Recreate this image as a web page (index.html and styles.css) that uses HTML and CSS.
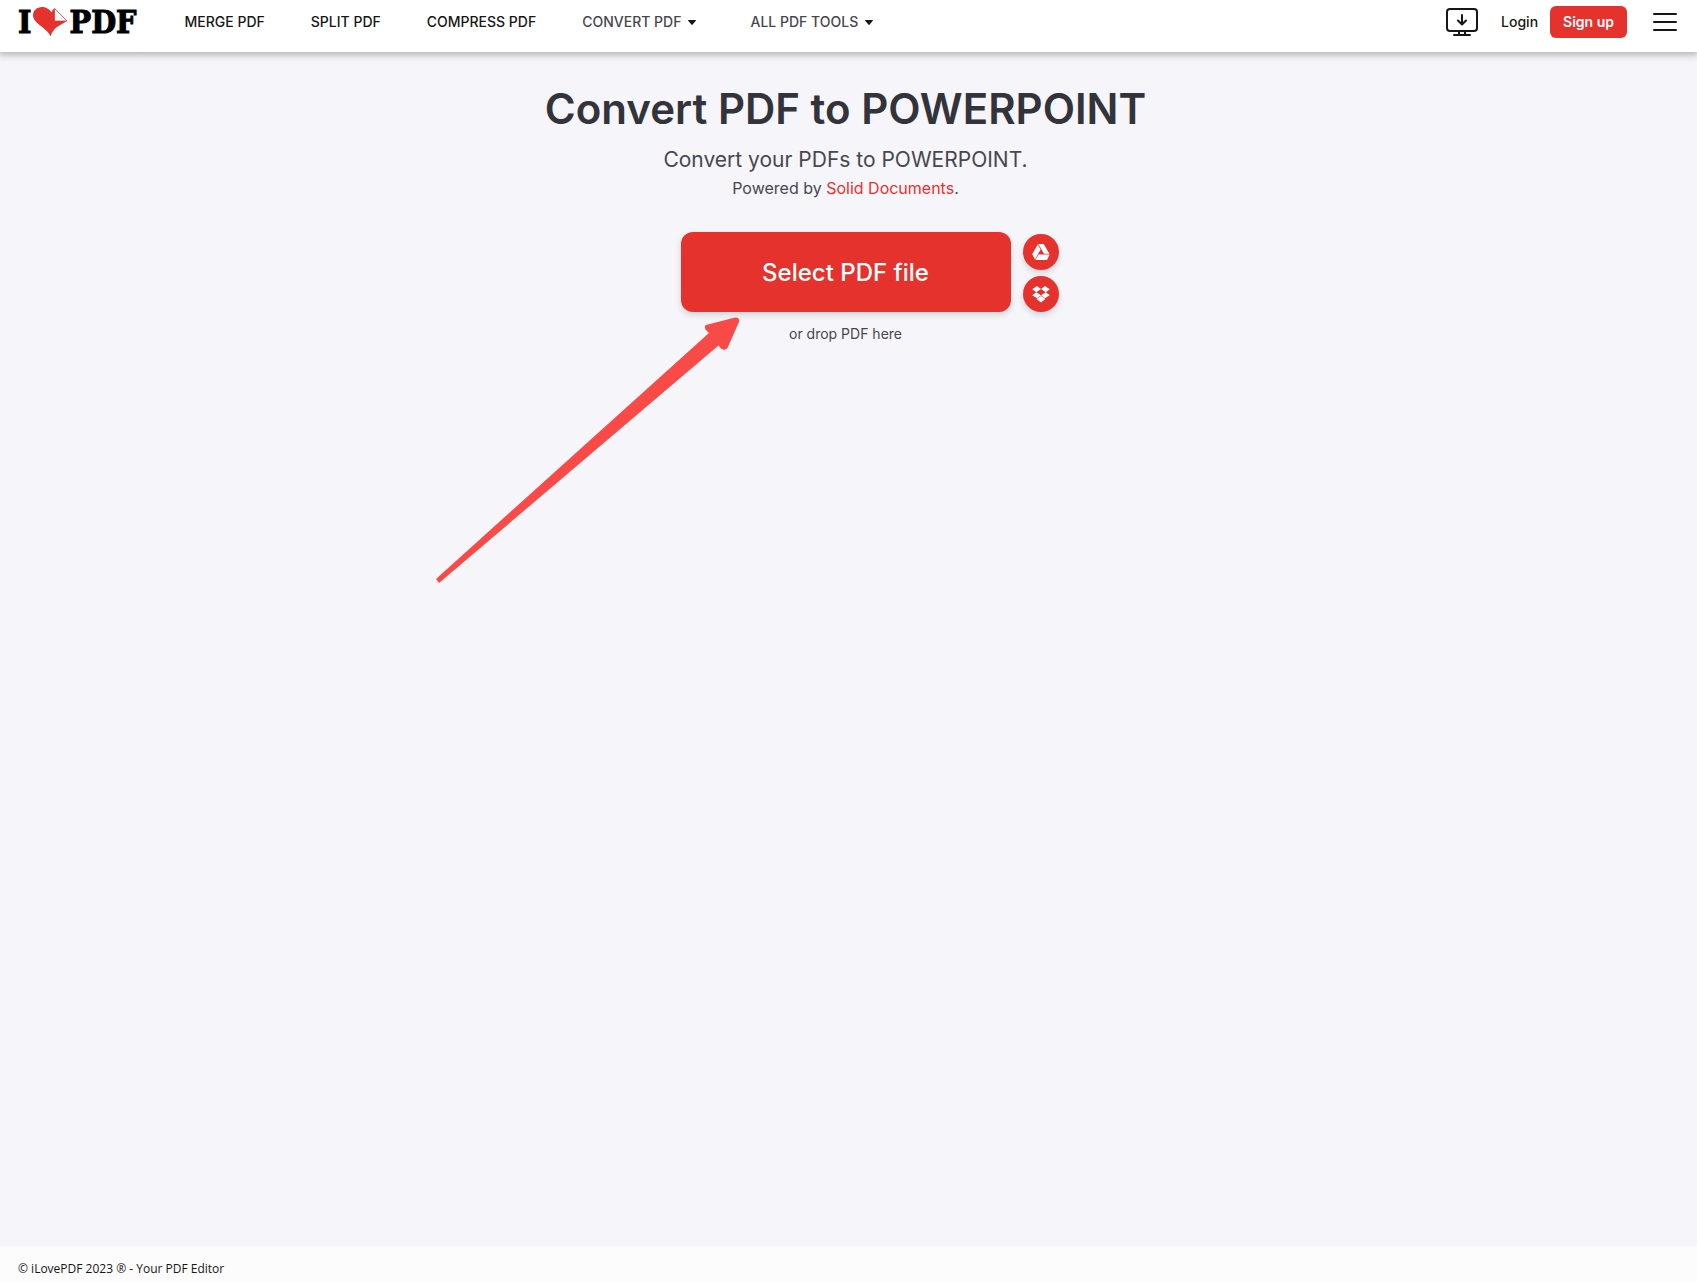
FILE: index.html
```html
<!DOCTYPE html>
<html lang="en">
<head>
<meta charset="utf-8">
<meta name="viewport" content="width=device-width, initial-scale=1">
<title>Convert PDF to POWERPOINT</title>
<link rel="stylesheet" href="styles.css">
</head>
<body>
<header class="header">
  <a class="brand" href="#" aria-label="iLovePDF">
    <span>I</span>
    <svg class="heart" viewBox="0 0 34 30" aria-hidden="true">
      <path fill="#e5322d" d="M17.500 29.500C16.500 26 13 23 6.500 18C2 14.500 0 11.500 0 8.500C0 3.500 4 0 9 0C13.500 0 17 2.500 18.500 5.500C19 4 20 2.500 21.500 1.500L34 14L24 20C20.500 22.500 18.500 26 17.500 29.500Z"/>
      <path fill="#fff" stroke="#e5322d" stroke-width=".7" d="M21.500 1.500V14H34Z"/>
    </svg>
    <span>PDF</span>
  </a>
  <nav class="nav">
    <a class="nav-link" href="#">MERGE PDF</a>
    <a class="nav-link" href="#">SPLIT PDF</a>
    <a class="nav-link" href="#">COMPRESS PDF</a>
    <button class="nav-link nav-menu" type="button">CONVERT PDF
      <svg class="caret" viewBox="0 0 8 5" aria-hidden="true"><path d="M.5 0h7q.8.200.3.800L4.600 4.600q-.6.600-1.200 0L.2.800Q-.3.200.5 0Z"/></svg></button>
    <button class="nav-link nav-menu" type="button">ALL PDF TOOLS
      <svg class="caret" viewBox="0 0 8 5" aria-hidden="true"><path d="M.5 0h7q.8.200.3.800L4.600 4.600q-.6.600-1.200 0L.2.800Q-.3.200.5 0Z"/></svg></button>
  </nav>
  <div class="account">
    <a class="desktop" href="#" aria-label="Download desktop app">
      <svg width="32" height="28" viewBox="0 0 32 28" fill="none" stroke="#161616" stroke-width="2" stroke-linecap="round" stroke-linejoin="round" aria-hidden="true">
        <rect x="1" y="1" width="30" height="22" rx="3"/>
        <path d="M16 7v9M12 12.500l4 4 4-4M13 23v4M19 23v4M8 27h16"/>
      </svg>
    </a>
    <a class="login" href="#">Login</a>
    <a class="signup" href="#">Sign up</a>
    <button class="burger" type="button" aria-label="Menu">
      <svg width="24" height="20" viewBox="0 0 24 20" stroke="#161616" stroke-width="2" stroke-linecap="round" aria-hidden="true"><path d="M1 2h22M1 10h22M1 18h22"/></svg>
    </button>
  </div>
</header>
<main class="main">
  <h1 class="title">Convert PDF to POWERPOINT</h1>
  <h2 class="subtitle">Convert your PDFs to POWERPOINT.</h2>
  <p class="powered">Powered by <a href="#">Solid Documents</a>.</p>
  <div class="uploader">
    <div class="pick">
      <button class="select" type="button">Select PDF file</button>
      <svg class="arrow" viewBox="0 0 304 267" aria-hidden="true"><path fill="#f84b47" d="M0 262L273 16L269.500 12.500Q267.500 8 272 7.500L299 .5Q304 0 303 5L291.500 31Q289 34 285.500 32L282.500 28.500L3 266Z"/></svg>
    </div>
    <div class="sources">
      <button class="source" type="button" aria-label="Select from Google Drive">
        <svg width="18" height="16" viewBox="0 0 18 16" fill="#fff" aria-hidden="true"><path d="M6.300 0h5.400L17.400 9.800H12ZM5.700.5L8.600 5.500L3 15.400L.2 10.300ZM6.500 10.500H17.700L15 16H3.400Z"/></svg>
      </button>
      <button class="source" type="button" aria-label="Select from Dropbox">
        <svg width="18" height="17" viewBox="0 0 18 17" fill="#fff" aria-hidden="true"><path d="M5 0L9 3L4.200 6.200L.2 3.200ZM13 0L9 3L13.800 6.200L17.800 3.200ZM4.200 6.200L9 9.200L5 12.200L.2 9.200ZM13.800 6.200L9 9.200L13 12.200L17.800 9.200ZM9 10L13.400 13L9 16.500L4.600 13Z"/></svg>
      </button>
    </div>
  </div>
  <p class="drop">or drop PDF here</p>
</main>
<footer class="footer">© iLovePDF 2023 ® - Your PDF Editor</footer>
</body>
</html>
```
FILE: styles.css
```css
* {
  box-sizing: border-box;
}

body {
  display: flex;
  flex-direction: column;
  min-height: 100vh;
  margin: 0;
  background: #f5f5fa;
  color: #47474f;
  font-family: Inter, "Liberation Sans", sans-serif;
}

a {
  color: inherit;
  text-decoration: none;
}

button {
  padding: 0;
  border: 0;
  background: none;
  color: inherit;
  font: inherit;
  cursor: pointer;
}

svg {
  display: block;
}

h1, h2, p {
  margin: 0;
}

.header {
  display: flex;
  align-items: center;
  height: 52px;
  padding: 0 20px 8px 18px;
  background: #fff;
  box-shadow: 0 0 8px 2px rgba(0, 0, 0, 0.32);
}

.brand {
  display: flex;
  align-items: center;
  gap: 2px;
  color: #000;
  font: bold 32px/44px "DejaVu Serif Condensed", "DejaVu Serif", serif;
  -webkit-text-stroke: 1px #000;
}

.heart {
  width: 34px;
  height: 30px;
}

.nav {
  display: flex;
  gap: 46px;
  margin-left: 48px;
}

.nav-link {
  color: #161616;
  font-size: 14px;
  font-weight: 500;
  line-height: 20px;
  white-space: nowrap;
}

.nav-menu {
  display: flex;
  align-items: center;
  gap: 7px;
  padding-right: 8px;
  color: #47474f;
}

.caret {
  width: 8px;
  height: 5px;
  fill: #161616;
}

.account {
  display: flex;
  align-items: center;
  margin-left: auto;
  color: #161616;
  font-size: 14px;
  font-weight: 500;
  line-height: 20px;
}

.login {
  margin: 0 12px 0 23px;
}

.signup {
  padding: 6px 13px;
  border-radius: 6px;
  background: #e5322d;
  color: #fff;
  font-weight: 600;
}

.burger {
  margin-left: 26px;
}

.main {
  display: flex;
  flex: 1;
  flex-direction: column;
  align-items: center;
  padding: 31px 6px 0 0;
}

.title {
  color: #33333b;
  font-size: 42px;
  font-weight: 600;
  line-height: 52px;
}

.subtitle {
  margin-top: 9px;
  font-size: 21px;
  font-weight: 400;
  line-height: 32px;
}

.powered {
  font-size: 16px;
  font-weight: 400;
  line-height: 25px;
}

.powered a {
  color: #e5322d;
}

.uploader {
  display: grid;
  grid-template-columns: 1fr 330px 1fr;
  gap: 12px;
  width: 100%;
  margin-top: 31px;
}

.pick {
  position: relative;
  grid-column: 2;
}

.select {
  width: 100%;
  height: 80px;
  border-radius: 12px;
  background: #e5322d;
  box-shadow: 0 3px 6px rgba(0, 0, 0, 0.14);
  color: #fff;
  font-size: 24px;
  font-weight: 500;
}

/* Hint arrow lies over the drop area and points at the button */
.arrow {
  position: absolute;
  top: 85px;
  right: 271px;
  width: 304px;
  height: 267px;
  pointer-events: none;
}

.sources {
  display: flex;
  flex-direction: column;
  justify-content: flex-end;
  gap: 6px;
}

.source {
  display: grid;
  place-items: center;
  width: 36px;
  height: 36px;
  border-radius: 50%;
  background: #e5322d;
  box-shadow: 0 3px 6px rgba(0, 0, 0, 0.14);
}

.drop {
  margin-top: 12px;
  font-size: 14px;
  line-height: 20px;
}

.footer {
  padding: 13px 18px 3px;
  background: #fcfcfd;
  color: #161616;
  font-family: "Open Sans", "Liberation Sans", sans-serif;
  font-size: 12px;
  line-height: 20px;
}
```
